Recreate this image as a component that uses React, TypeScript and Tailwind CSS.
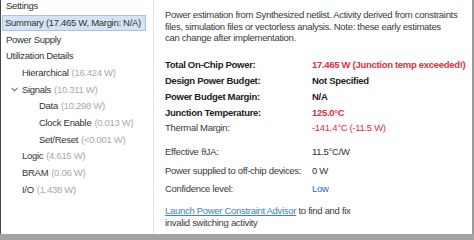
import React from 'react';

const font = { fontFamily: '"Liberation Sans", Arial, sans-serif' };

interface TreeItem {
  label: string;
  value?: string;
  indent: number;
  chevron?: boolean;
  selected?: boolean;
}

const tree: TreeItem[] = [
  { label: 'Settings', indent: 0 },
  { label: 'Summary (17.465 W, Margin: N/A)', indent: 0, selected: true },
  { label: 'Power Supply', indent: 0 },
  { label: 'Utilization Details', indent: 0 },
  { label: 'Hierarchical', value: '(16.424 W)', indent: 1 },
  { label: 'Signals', value: '(10.311 W)', indent: 1, chevron: true },
  { label: 'Data', value: '(10.298 W)', indent: 2 },
  { label: 'Clock Enable', value: '(0.013 W)', indent: 2 },
  { label: 'Set/Reset', value: '(<0.001 W)', indent: 2 },
  { label: 'Logic', value: '(4.615 W)', indent: 1 },
  { label: 'BRAM', value: '(0.06 W)', indent: 1 },
  { label: 'I/O', value: '(1.438 W)', indent: 1 },
];

const indentClass = ['pl-[5px]', 'pl-[21px]', 'pl-[38px]'];

const rows = [
  { label: 'Total On-Chip Power:', value: '17.465 W (Junction temp exceeded!)', bold: true, tone: 'text-[#e0303a]', h: 'h-[16px]' },
  { label: 'Design Power Budget:', value: 'Not Specified', bold: true, tone: 'text-[#222]', h: 'h-[16px]' },
  { label: 'Power Budget Margin:', value: 'N/A', bold: true, tone: 'text-[#222]', h: 'h-[16px]' },
  { label: 'Junction Temperature:', value: '125.0°C', bold: true, tone: 'text-[#e0303a]', h: 'h-[16px]' },
  { label: 'Thermal Margin:', value: '-141.4°C (-11.5 W)', bold: false, tone: 'text-[#e0303a]', h: 'h-[14px]' },
  { label: 'Effective ϑJA:', value: '11.5°C/W', bold: false, tone: 'text-[#333]', h: 'h-[15px] mt-[10px]' },
  { label: 'Power supplied to off-chip devices:', value: '0 W', bold: false, tone: 'text-[#333]', h: 'h-[20px] mt-[1px]' },
  { label: 'Confidence level:', value: 'Low', bold: false, tone: 'text-[#2f62d0]', h: 'h-[17px]' },
];

export default function App() {
  return (
    <div style={font} className="w-[474px] h-[240px] overflow-hidden bg-[#8a8a8a] flex flex-col text-[9.5px] tracking-[-0.3px]">
      <div className="flex flex-1 min-h-0 bg-white border-l border-[#444]">
        {/* Tree */}
        <div className="w-[153px] shrink-0 border-r border-[#e8e8e8] flex flex-col -mt-[2px]">
          {tree.map((item, i) => (
            <div key={i} className="h-[16.7px] shrink-0 flex items-center pl-[2px] pr-[6px]">
              <div
                className={`flex items-center h-full w-full ${indentClass[item.indent]} ${
                  item.selected ? 'bg-[#d6e3f4] border border-[#a9c2e4] -ml-[1px] !pl-[2px]' : '-ml-[2px]'
                }`}
              >
                {item.chevron && (
                  <svg width="7" height="5" viewBox="0 0 7 5" className="-ml-[11px] mr-[4px]">
                    <path d="M0.5 0.8 L3.5 4 L6.5 0.8" fill="none" stroke="#777" strokeWidth="1.1" />
                  </svg>
                )}
                <span className="text-[#333] whitespace-nowrap">{item.label}</span>
                {item.value && <span className="text-[#a8a8a8] ml-[3px] whitespace-nowrap">{item.value}</span>}
              </div>
            </div>
          ))}
        </div>

        {/* Summary */}
        <div className="flex-1 pl-[11px] pr-[2px] pt-[9px] border-r-[2px] border-[#9a9a9a]">
          <p className="text-[#3a3a3a] leading-[11.7px] whitespace-nowrap">
            Power estimation from Synthesized netlist. Activity derived from constraints
            <br />
            files, simulation files or vectorless analysis. Note: these early estimates
            <br />
            can change after implementation.
          </p>
          <div className="mt-[13px] flex flex-col">
            {rows.map(r => (
              <div key={r.label} className={`flex items-center shrink-0 ${r.h}`}>
                <span className={`w-[147px] shrink-0 whitespace-nowrap ${r.bold ? 'font-bold text-[#222]' : 'text-[#3a3a3a]'}`}>
                  {r.label}
                </span>
                <span className={`whitespace-nowrap ${r.tone} ${r.bold ? 'font-bold' : ''}`}>{r.value}</span>
              </div>
            ))}
          </div>
          <p className="mt-[7px] text-[#3a3a3a] leading-[12px]">
            <a className="text-[#3d7fd6] underline">Launch Power Constraint Advisor</a> to find and fix
            <br />
            invalid switching activity
          </p>
        </div>
      </div>
      <div className="h-[6px] shrink-0 bg-[#a3a3a3]" />
    </div>
  );
}
